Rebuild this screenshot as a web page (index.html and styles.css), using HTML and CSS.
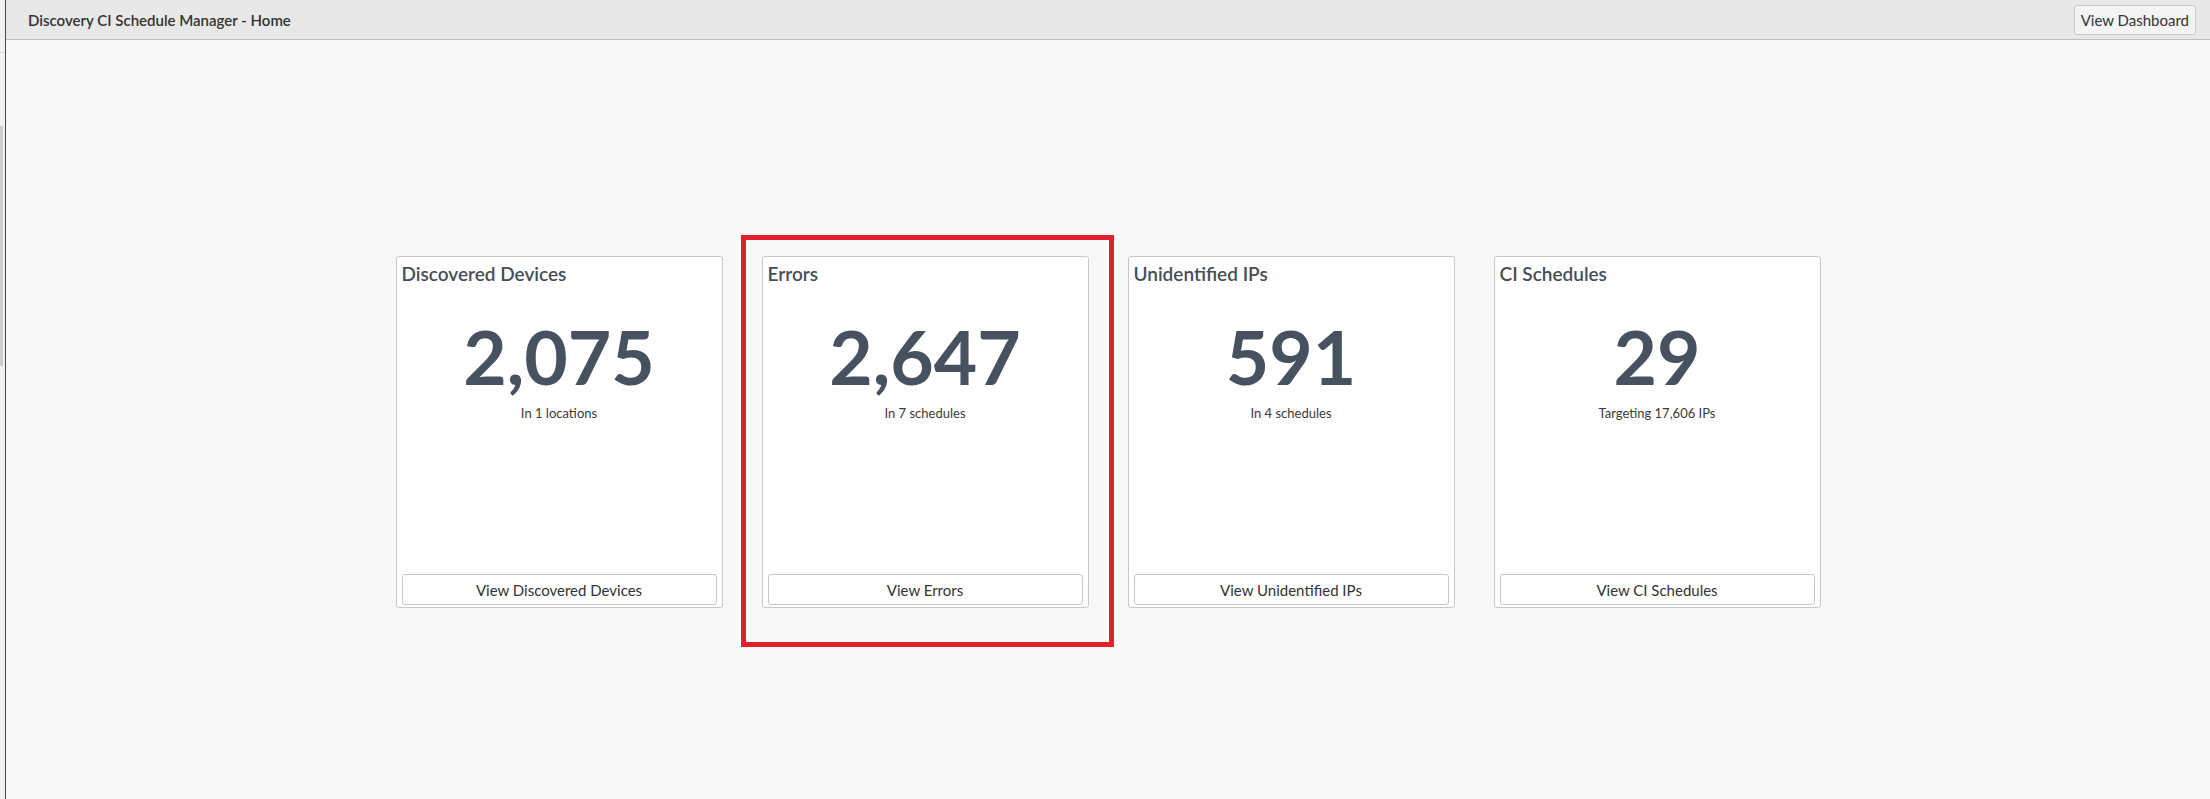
FILE: index.html
```html
<!DOCTYPE html>
<html>
<head>
	<title>Discovery CI Schedule Manager - Home</title>
	<link rel="stylesheet" href="styles.css">
</head>
<body>
	<div class="side-strip">
		<div class="strip-line"></div>
		<div class="strip-block"></div>
	</div>
	<div class="app">
		<div class="topbar">
			<span class="page-title">Discovery CI Schedule Manager - Home</span>
			<button type="button" class="dash-btn">View Dashboard</button>
		</div>
		<div class="content">
			<div class="card-row">
				<div class="card">
					<div class="card-title">Discovered Devices</div>
					<div class="card-number">2,075</div>
					<div class="card-sub">In 1 locations</div>
					<button type="button" class="card-btn">View Discovered Devices</button>
				</div>
				<div class="card">
					<div class="highlight"></div>
					<div class="card-title">Errors</div>
					<div class="card-number">2,647</div>
					<div class="card-sub">In 7 schedules</div>
					<button type="button" class="card-btn">View Errors</button>
				</div>
				<div class="card">
					<div class="card-title">Unidentified IPs</div>
					<div class="card-number">591</div>
					<div class="card-sub">In 4 schedules</div>
					<button type="button" class="card-btn">View Unidentified IPs</button>
				</div>
				<div class="card">
					<div class="card-title">CI Schedules</div>
					<div class="card-number">29</div>
					<div class="card-sub">Targeting 17,606 IPs</div>
					<button type="button" class="card-btn">View CI Schedules</button>
				</div>
			</div>
		</div>
	</div>
</body>
</html>
```

FILE: styles.css
```css
html, body{
	margin: 0;
	height: 100%;
}
body{
	display: flex;
	font-family: "Lato", "Liberation Sans", sans-serif;
	background-color: #f8f8f8;
	color: #333;
	overflow: hidden;
}
.side-strip{
	width: 5px;
	border-right: 1px solid #454545;
	background-color: #f1f1f1;
	flex-shrink: 0;
}
.strip-line{
	height: 52px;
	border-bottom: 1px solid #d6d6d6;
}
.strip-block{
	margin-top: 73px;
	height: 240px;
	width: 3px;
	background-color: #cdcdcd;
}
.app{
	flex: 1;
	display: flex;
	flex-direction: column;
}
.topbar{
	height: 39px;
	border-bottom: 1px solid #bdbdbd;
	background-color: #e8e8e9;
	display: flex;
	align-items: center;
	justify-content: space-between;
	padding: 0 14px 0 22px;
}
.page-title{
	font-size: 15px;
	font-weight: 600;
	color: #333;
}
.dash-btn{
	height: 30px;
	padding: 0 6px;
	font-family: inherit;
	font-size: 15px;
	color: #333;
	background-color: #f4f4f4;
	border: 1px solid #c9c9c9;
	border-radius: 3px;
}
.content{
	flex: 1;
	display: flex;
	justify-content: center;
	padding-top: 216px;
}
.card-row{
	display: flex;
	gap: 39px;
	align-items: flex-start;
}
.card{
	position: relative;
	width: 325px;
	height: 350px;
	background-color: #fff;
	border: 1px solid #c8c8c8;
	border-radius: 3px;
	display: flex;
	flex-direction: column;
}
.highlight{
	position: absolute;
	left: -22px;
	top: -22px;
	right: -26px;
	bottom: -40px;
	border: 5px solid #e2202b;
	pointer-events: none;
}
.card-title{
	font-size: 19px;
	font-weight: 600;
	line-height: 24px;
	padding: 5px 5px 0;
	color: #454e58;
}
.card-number{
	margin-top: 33px;
	font-size: 75px;
	font-weight: 700;
	line-height: 75px;
	text-align: center;
	color: #46525f;
}
.card-sub{
	margin-top: 11px;
	font-size: 13px;
	line-height: 16px;
	text-align: center;
	color: #3a3a3a;
}
.card-btn{
	margin: auto 5px 2px;
	height: 31px;
	font-family: inherit;
	font-size: 15px;
	color: #333;
	background-color: #fff;
	border: 1px solid #c6c6c6;
	border-radius: 3px;
}
```
